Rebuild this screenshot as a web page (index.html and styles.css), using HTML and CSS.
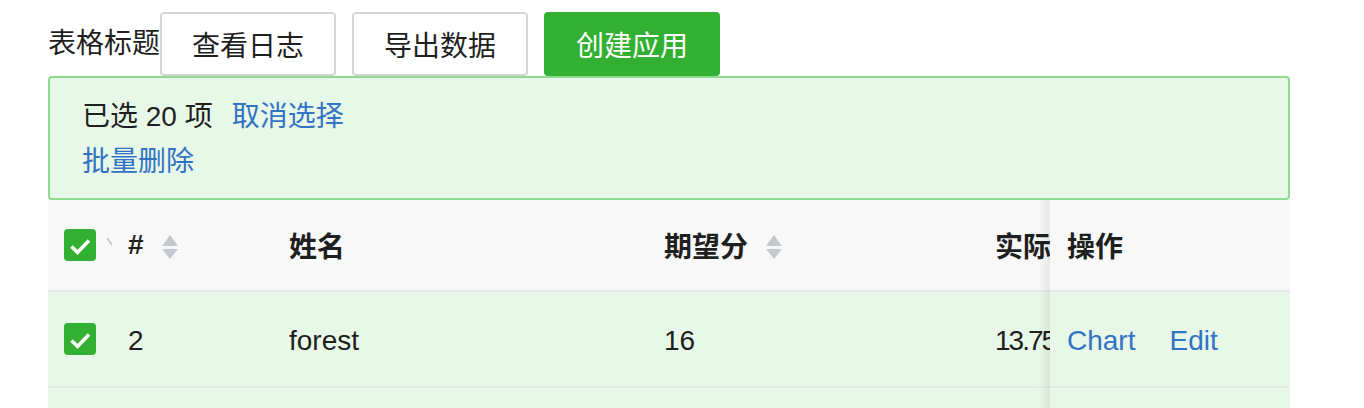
FILE: index.html
```html
<!DOCTYPE html>
<html lang="zh-CN">
<head>
<meta charset="utf-8">
<title>表格</title>
<link rel="stylesheet" href="styles.css">
</head>
<body>
<div class="page">
  <div class="toolbar">
    <span class="title">表格标题</span>
    <div class="actions">
      <button class="btn">查看日志</button>
      <button class="btn">导出数据</button>
      <button class="btn btn-primary">创建应用</button>
    </div>
  </div>
  <div class="alert">
    <div>已选 20 项<a class="link cancel" href="#">取消选择</a></div>
    <div><a class="link" href="#">批量删除</a></div>
  </div>
  <div class="table">
    <div class="row head">
      <div class="cell">
        <svg class="checkbox" width="32" height="32" viewBox="0 0 32 32"><rect width="32" height="32" rx="4" fill="#32b032"/><path d="M7.5 17.5 L13.5 23.5 L25 11.5" fill="none" stroke="#fff" stroke-width="3.6"/></svg>
        <svg class="tick" width="8" height="10" viewBox="0 0 8 10"><path d="M1 1 L6 8" stroke="#c4c4c4" stroke-width="1.6" fill="none"/></svg>
      </div>
      <div class="cell">#<svg class="sort" width="16" height="24" viewBox="0 0 16 24"><path d="M8 0 L16 11 L0 11 Z" fill="#c5c8ce"/><path d="M0 14 L16 14 L8 24 Z" fill="#c5c8ce"/></svg></div>
      <div class="cell">姓名</div>
      <div class="cell">期望分<svg class="sort" width="16" height="24" viewBox="0 0 16 24"><path d="M8 0 L16 11 L0 11 Z" fill="#c5c8ce"/><path d="M0 14 L16 14 L8 24 Z" fill="#c5c8ce"/></svg></div>
      <div class="cell">实际分</div>
      <div class="cell fixed">操作</div>
    </div>
    <div class="row body">
      <div class="cell">
        <svg class="checkbox" width="32" height="32" viewBox="0 0 32 32"><rect width="32" height="32" rx="4" fill="#32b032"/><path d="M7.5 17.5 L13.5 23.5 L25 11.5" fill="none" stroke="#fff" stroke-width="3.6"/></svg>
      </div>
      <div class="cell">2</div>
      <div class="cell">forest</div>
      <div class="cell">16</div>
      <div class="cell num">13.75</div>
      <div class="cell fixed"><a class="link" href="#">Chart</a><a class="link edit" href="#">Edit</a></div>
    </div>
    <div class="row body short">
      <div class="cell"></div>
      <div class="cell"></div>
      <div class="cell"></div>
      <div class="cell"></div>
      <div class="cell"></div>
      <div class="cell fixed"></div>
    </div>
  </div>
</div>
</body>
</html>
```

FILE: styles.css
```css
* { box-sizing: border-box; }
html, body { margin: 0; background: #fff; overflow: hidden; }
body {
  font-family: "Liberation Sans", "Noto Sans CJK SC", sans-serif;
  font-size: 28px;
  color: #1f1f1f;
}
.page {
  width: 1242px;
  margin-left: 48px;
  padding-top: 12px;
}
.toolbar {
  display: flex;
  align-items: center;
  height: 64px;
}
.title { line-height: 64px; }
.actions {
  display: flex;
  gap: 16px;
}
.btn {
  width: 176px;
  height: 64px;
  padding: 0;
  border: 2px solid #d6d6d6;
  border-radius: 4px;
  background: #fff;
  color: #1f1f1f;
  font: inherit;
  display: flex;
  align-items: center;
  justify-content: center;
}
.btn-primary {
  background: #32b032;
  border-color: #32b032;
  color: #fff;
}
.alert {
  height: 124px;
  border: 2px solid #8edc8e;
  border-radius: 4px;
  background: #e8f8e8;
  padding: 16px 32px 12px;
  line-height: 45px;
}
.link { color: #3273c4; text-decoration: none; }
.cancel { margin-left: 19px; }
.row {
  display: grid;
  grid-template-columns: 64px 161px 375px 331px 71px 240px;
}
.cell {
  display: flex;
  align-items: center;
  padding-left: 16px;
  white-space: nowrap;
  overflow: hidden;
}
.head .cell {
  height: 92px;
  background: #f8f8f9;
  border-bottom: 2px solid #e9eaec;
  font-weight: bold;
}
.body .cell {
  height: 96px;
  padding-top: 3px;
  background: #e8f8e8;
  border-bottom: 2px solid #e2ede2;
}
.body.short .cell { height: 20px; border-bottom: 0; padding-top: 0; }
.num { letter-spacing: -2px; }
.checkbox { flex: none; }
.body .checkbox { margin-top: -3px; }
.tick { flex: none; margin-left: 10px; margin-top: -6px; }
.sort { flex: none; margin-left: 18px; margin-top: 4px; }
.fixed {
  position: relative;
  overflow: visible;
}
.head .fixed, .body .fixed { padding-left: 17px; }
.fixed::before {
  content: "";
  position: absolute;
  left: -12px;
  top: 0;
  bottom: -2px;
  width: 12px;
  background: linear-gradient(to right, rgba(0,0,0,0), rgba(0,0,0,0.07));
}
.edit { margin-left: 34px; }
```
